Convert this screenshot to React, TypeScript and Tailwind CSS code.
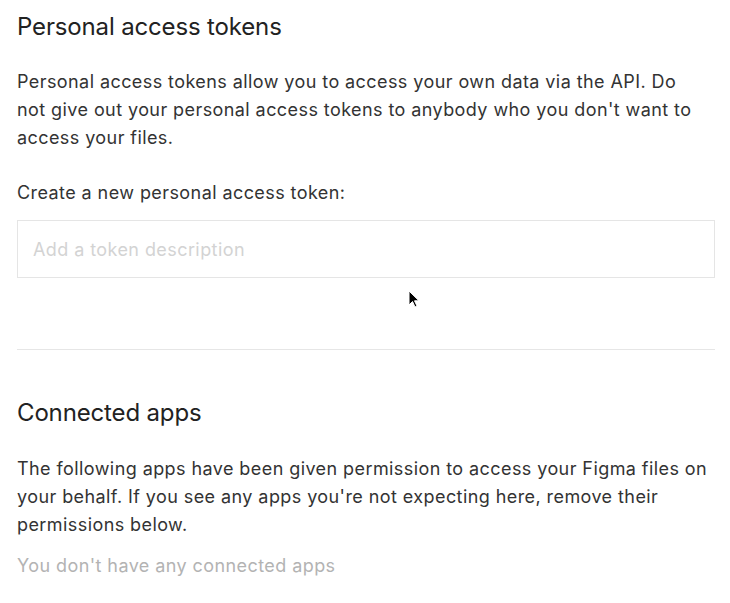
import React from "react";

export default function App() {
  return (
    <div
      className="relative w-[730px] h-[603px] bg-white overflow-hidden"
      style={{ fontFamily: "Inter, 'Noto Sans', sans-serif" }}
    >
      <div className="pl-[17px] pr-[15px] pt-[11px]">
        <h1 className="text-[24px] leading-[32px] font-normal tracking-[-0.15px] text-[#222]">
          Personal access tokens
        </h1>
        <p className="mt-[25px] max-w-[692px] text-[18px] leading-[28px] tracking-[0.42px] text-[#333]">
          Personal access tokens allow you to access your own data via the API. Do not give out your
          personal access tokens to anybody who you don't want to access your files.
        </p>
        <p className="mt-[27px] text-[18px] leading-[28px] tracking-[0.42px] text-[#333]">
          Create a new personal access token:
        </p>
        <div className="mt-[13px] h-[58px] border border-[#e5e5e5] flex items-center px-[15px]">
          <span className="text-[18px] tracking-[0.42px] text-[#d3d3d3]">Add a token description</span>
        </div>
        <div className="mt-[71px] h-px bg-[#e6e6e6]" />
        <h2 className="mt-[47px] text-[24px] leading-[32px] font-normal tracking-[-0.15px] text-[#222]">
          Connected apps
        </h2>
        <p className="mt-[26px] text-[18px] leading-[28px] tracking-[0.42px] text-[#333]">
          The following apps have been given permission to access your Figma files on your behalf.
          If you see any apps you're not expecting here, remove their permissions below.
        </p>
        <p className="mt-[13px] text-[18px] leading-[28px] tracking-[0.42px] text-[#b3b3b3]">
          You don't have any connected apps
        </p>
      </div>
      <svg
        className="absolute left-[408px] top-[290px]"
        width="12"
        height="19"
        viewBox="0 0 12 19"
      >
        <path
          d="M1 1 L1 15 L4.5 11.5 L7 17 L9 16 L6.5 10.8 L11 10.8 Z"
          fill="#000"
          stroke="#fff"
          strokeWidth="1"
          strokeLinejoin="round"
        />
      </svg>
    </div>
  );
}
